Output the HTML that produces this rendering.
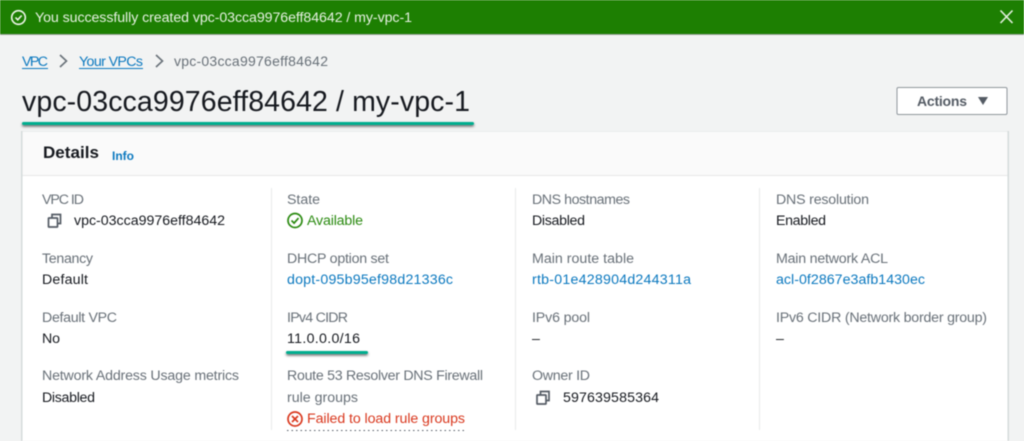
<!DOCTYPE html>
<html><head><meta charset="utf-8"><title>VPC details</title>
<style>
html,body{margin:0;padding:0;background:#f2f3f3;width:1024px;height:441px;overflow:hidden}
svg{display:block;filter:blur(.4px)}
text{font-family:"Liberation Sans",sans-serif;font-size:14.2px}
.l{fill:#687078}.v{fill:#16191f}.a{fill:#0a78bf}
</style></head><body>
<svg width="1024" height="441" viewBox="0 0 1024 441" xmlns="http://www.w3.org/2000/svg">
<defs><filter id="s" x="-5%" y="-200%" width="110%" height="500%"><feDropShadow dx="0" dy="1.5" stdDeviation="1.300" flood-color="#000" flood-opacity=".6"/></filter></defs>
<rect width="1024" height="441" fill="#f2f3f3"/>
<rect width="1024" height="34" fill="#1d7f02"/>
<rect y="34" width="1024" height="1" fill="#9aa39a"/>
<circle cx="18.500" cy="17.500" r="6.800" fill="none" stroke="#eef5ea" stroke-width="1.600"/>
<path d="M15.500 17.500l2.200 2.300 4-4.300" fill="none" stroke="#eef5ea" stroke-width="1.600"/>
<text x="35" y="22" fill="#e6f1e2" textLength="377">You successfully created vpc-03cca9976eff84642 / my-vpc-1</text>
<path d="M1000.500 10.500l12 12.500M1012.500 10.500l-12 12.500" stroke="#e6f1e2" stroke-width="1.600" fill="none"/>

<text x="22" y="66" class="a" textLength="26">VPC</text><rect x="22" y="68" width="26" height="1" fill="#0a78bf"/>
<path d="M60 55l6.500 6-6.500 6" fill="none" stroke="#687078" stroke-width="1.600"/>
<text x="79" y="66" class="a" textLength="64">Your VPCs</text><rect x="79" y="68" width="64" height="1" fill="#0a78bf"/>
<path d="M156 55l6.500 6-6.500 6" fill="none" stroke="#687078" stroke-width="1.600"/>
<text x="174" y="66" fill="#687078" textLength="154" style="font-size:14px">vpc-03cca9976eff84642</text>

<text x="22" y="111" fill="#16191f" textLength="448" style="font-size:28.500px">vpc-03cca9976eff84642 / my-vpc-1</text>

<rect x="897" y="87.500" width="110" height="27" rx="1.500" fill="#fff" stroke="#8f969c" stroke-width="1"/>
<text x="917" y="106" fill="#545b64" textLength="50" style="font-weight:bold;font-size:14px">Actions</text>
<path d="M978 97h10l-5 8z" fill="#545b64"/>

<rect x="22" y="131" width="986" height="310" fill="#fff"/>
<rect x="22" y="131" width="986" height="44" fill="#fafafa"/>
<rect x="22" y="175" width="986" height="1" fill="#e6e8e8"/>
<rect x="22" y="131" width="986" height="1" fill="#eaeded"/>
<rect x="21" y="131" width="1.500" height="310" fill="#d5dbdb"/>
<rect x="1007.500" y="131" width="1.500" height="310" fill="#d5dbdb"/>
<rect x="22" y="122" width="452" height="3" rx="1.500" fill="#00ae8f" filter="url(#s)"/>

<text x="43" y="158" fill="#16191f" textLength="56" style="font-size:17px;font-weight:bold">Details</text>
<text x="112" y="160" fill="#0a78bf" textLength="22" style="font-size:12px;font-weight:bold">Info</text>

<rect x="271" y="188" width="1" height="242" fill="#e8eaea"/>
<rect x="515" y="188" width="1" height="242" fill="#e8eaea"/>
<rect x="759" y="188" width="1" height="242" fill="#e8eaea"/>

<text x="42" y="204" class="l" textLength="42">VPC ID</text>
<g fill="none" stroke="#545b64" stroke-width="1.700"><rect x="48.500" y="218" width="9" height="9" rx=".5"/><path d="M52 218v-3.500h8.500v9h-3"/></g>
<text x="74" y="225" class="v" textLength="151">vpc-03cca9976eff84642</text>
<text x="42" y="263" class="l" textLength="51">Tenancy</text>
<text x="42" y="284" class="v" textLength="46">Default</text>
<text x="42" y="322" class="l" textLength="75">Default VPC</text>
<text x="42" y="343" class="v" textLength="18">No</text>
<text x="42" y="380" class="l" textLength="197">Network Address Usage metrics</text>
<text x="42" y="402" class="v" textLength="53">Disabled</text>

<text x="287" y="204" class="l" textLength="33">State</text>
<circle cx="295" cy="220.500" r="7" fill="none" stroke="#2a8a10" stroke-width="1.700"/>
<path d="M291.500 220.500l2.600 2.600 4.400-5" fill="none" stroke="#2a8a10" stroke-width="1.700"/>
<text x="307" y="225" fill="#2a8a10" textLength="56">Available</text>
<text x="287" y="263" class="l" textLength="102">DHCP option set</text>
<text x="287" y="284" class="a" textLength="166">dopt-095b95ef98d21336c</text>
<text x="287" y="322" class="l" textLength="61">IPv4 CIDR</text>
<text x="287" y="343" class="v" textLength="73">11.0.0.0/16</text>
<rect x="286" y="351" width="82" height="3" rx="1.500" fill="#00ae8f" filter="url(#s)"/>
<text x="287" y="380" class="l" textLength="196">Route 53 Resolver DNS Firewall</text>
<text x="287" y="402" class="l" textLength="71">rule groups</text>
<circle cx="295" cy="419" r="7" fill="none" stroke="#d9381e" stroke-width="1.700"/>
<path d="M292 416l6 6M298 416l-6 6" fill="none" stroke="#d9381e" stroke-width="1.700"/>
<text x="307" y="423" fill="#d9381e" textLength="158">Failed to load rule groups</text>
<path d="M287 430.500h179" stroke="#545b64" stroke-width="1" stroke-dasharray="1.500 3" fill="none"/>

<text x="532" y="204" class="l" textLength="98">DNS hostnames</text>
<text x="532" y="225" class="v" textLength="53">Disabled</text>
<text x="532" y="263" class="l" textLength="102">Main route table</text>
<text x="532" y="284" class="a" textLength="159">rtb-01e428904d244311a</text>
<text x="532" y="322" class="l" textLength="58">IPv6 pool</text>
<text x="532" y="343" class="v" textLength="7">–</text>
<text x="532" y="380" class="l" textLength="58">Owner ID</text>
<g fill="none" stroke="#545b64" stroke-width="1.700"><rect x="537" y="395" width="9" height="9" rx=".5"/><path d="M540.500 395v-3.500h8.500v9h-3"/></g>
<text x="563" y="402" class="v" textLength="96">597639585364</text>

<text x="776" y="204" class="l" textLength="93">DNS resolution</text>
<text x="776" y="225" class="v" textLength="50">Enabled</text>
<text x="776" y="263" class="l" textLength="112">Main network ACL</text>
<text x="776" y="284" class="a" textLength="149">acl-0f2867e3afb1430ec</text>
<text x="776" y="322" class="l" textLength="211">IPv6 CIDR (Network border group)</text>
<text x="776" y="343" class="v" textLength="7">–</text>
</svg>
</body></html>
